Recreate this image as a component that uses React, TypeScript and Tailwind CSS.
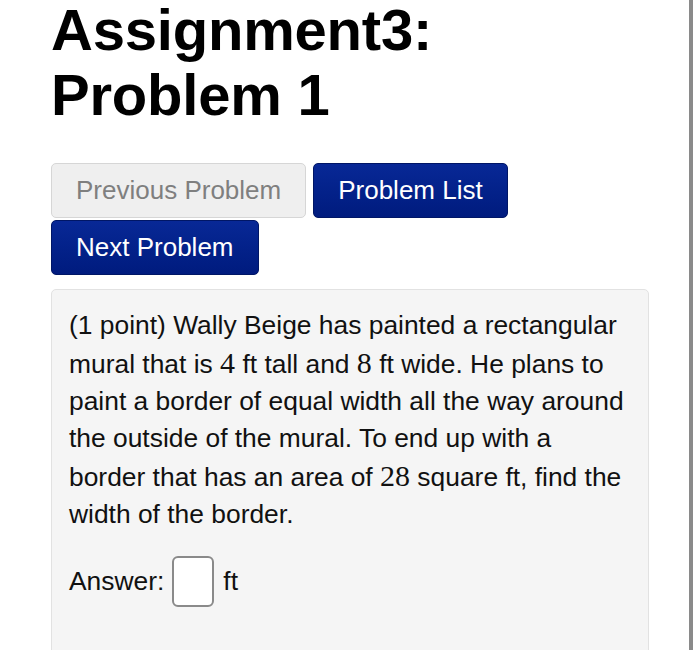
export default function App() {
  const num = 'font-["Liberation_Serif",serif] text-[30px] leading-[37px]'
  return (
    <div className="flex h-[650px] w-[700px] overflow-hidden bg-white font-['Liberation_Sans',Arial,sans-serif] text-[#111]">
      <div className="w-[689px] shrink-0 pl-[51px] pr-[40px]">
        <h1 className="-mt-[3px] text-[58px] font-bold leading-[65px] tracking-[-0.2px] text-black">
          Assignment3:
          <br />
          Problem 1
        </h1>

        {/* Navigation buttons */}
        <div className="mt-[36px] flex flex-wrap gap-x-[7px] gap-y-[2px] pr-[120px]">
          <button className="flex h-[55px] items-center rounded-[5px] border border-[#d6d6d6] bg-[#efefef] px-6 text-[26px] text-[#7f7f7f]">
            Previous Problem
          </button>
          <button className="flex h-[55px] items-center rounded-[5px] border border-[#001666] bg-gradient-to-b from-[#082896] to-[#001b7e] px-6 text-[26px] text-white">
            Problem List
          </button>
          <button className="flex h-[55px] items-center rounded-[5px] border border-[#001666] bg-gradient-to-b from-[#082896] to-[#001b7e] px-6 text-[26px] text-white">
            Next Problem
          </button>
        </div>

        {/* Problem body */}
        <div className="mt-[14px] h-[400px] w-[598px] rounded-t-[5px] border border-[#e2e2e2] bg-[#f5f5f5] pl-[17px] pr-[22px] pt-[17px]">
          <p className="text-[26.4px] leading-[37px]">
            (1 point) Wally Beige has painted a rectangular mural that is{' '}
            <span className={num}>4</span> ft tall and <span className={num}>8</span> ft wide. He
            plans to paint a border of equal width all the way around the outside of the mural. To
            end up with a border that has an area of <span className={num}>28</span> square ft,
            find the width of the border.
          </p>
          <div className="mt-[23px] flex items-center text-[26.4px]">
            <span>Answer:</span>
            <input
              type="text"
              className="ml-[8px] h-[51px] w-[42px] rounded-[6px] border-2 border-[#8a8a8a] bg-white"
            />
            <span className="ml-[9px]">ft</span>
          </div>
        </div>
      </div>
      <div className="w-[4px] shrink-0 bg-[#8a8a8a]" />
      <div className="flex-1 bg-white" />
    </div>
  )
}
